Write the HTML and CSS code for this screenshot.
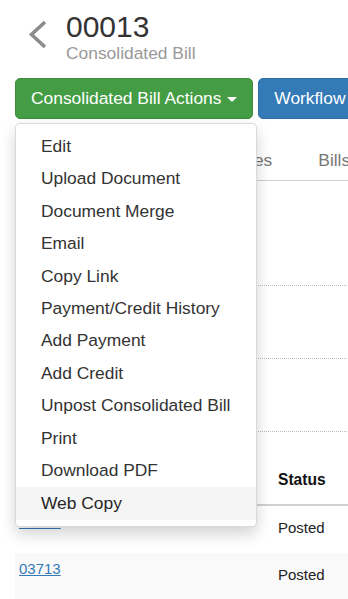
FILE: index.html
```html
<!DOCTYPE html>
<html>
<head>
<meta charset="utf-8">
<link rel="stylesheet" href="styles.css">
</head>
<body>
<div class="page">
  <header class="head">
    <svg class="back" width="20" height="30" viewBox="0 0 20 30"><polyline points="17,2 3.5,14.5 17,27" fill="none" stroke="#8c8c8c" stroke-width="3.6"/></svg>
    <div class="titles">
      <h1 class="num">00013</h1>
      <div class="sub">Consolidated Bill</div>
    </div>
  </header>

  <div class="actions">
    <div class="group">
      <button class="btn btn-green">Consolidated Bill Actions <span class="caret"></span></button>
      <ul class="menu">
        <li class="item">Edit</li>
        <li class="item">Upload Document</li>
        <li class="item">Document Merge</li>
        <li class="item">Email</li>
        <li class="item">Copy Link</li>
        <li class="item">Payment/Credit History</li>
        <li class="item">Add Payment</li>
        <li class="item">Add Credit</li>
        <li class="item">Unpost Consolidated Bill</li>
        <li class="item">Print</li>
        <li class="item">Download PDF</li>
        <li class="item item-hover">Web Copy</li>
      </ul>
    </div>
    <button class="btn btn-blue">Workflow <span class="caret"></span></button>
  </div>

  <ul class="tabs">
    <li class="tab tab-first">Details</li>
    <li class="tab">Fees</li>
    <li class="tab">Notes</li>
    <li class="tab">Bills</li>
  </ul>

  <div class="details">
    <div class="drow drow-first"></div>
    <div class="drow"></div>
    <div class="drow"></div>
  </div>

  <div class="table">
    <div class="trow thead">
      <div class="cell"></div>
      <div class="cell th">Status</div>
    </div>
    <div class="trow">
      <div class="cell cell-link"><a class="link" href="#">03712</a></div>
      <div class="cell cell-text">Posted</div>
    </div>
    <div class="trow trow-striped">
      <div class="cell cell-link"><a class="link" href="#">03713</a></div>
      <div class="cell cell-text">Posted</div>
    </div>
  </div>
</div>
</body>
</html>
```

FILE: styles.css
```css
html, body {
  margin: 0;
  padding: 0;
  overflow: hidden;
  background: #fff;
}
body {
  font-family: "Liberation Sans", Arial, sans-serif;
  color: #333;
  width: 348px;
  height: 599px;
}
.page {
  padding-left: 15px;
  width: 400px;
}
.head {
  display: flex;
  align-items: flex-start;
  padding-top: 11px;
}
.back {
  margin-left: 13px;
  margin-top: 9px;
  flex-shrink: 0;
}
.titles {
  margin-left: 18px;
}
.num {
  margin: 0;
  font-weight: normal;
  font-size: 30px;
  line-height: 32px;
  color: #333;
}
.sub {
  font-size: 17.4px;
  line-height: 20px;
  color: #999;
}
.actions {
  display: flex;
  gap: 5px;
  margin-top: 15px;
  white-space: nowrap;
}
.group {
  position: relative;
  flex-shrink: 0;
}
.btn {
  font-family: "Liberation Sans", Arial, sans-serif;
  font-size: 17.4px;
  line-height: 24.8px;
  padding: 7.1px 15px;
  border: 1px solid transparent;
  border-radius: 5px;
  color: #fff;
  flex-shrink: 0;
  white-space: nowrap;
}
.btn-green {
  background: #449d44;
  border-color: #3d8b3d;
}
.btn-blue {
  background: #337ab7;
  border-color: #2e6da4;
}
.caret {
  display: inline-block;
  width: 0;
  height: 0;
  margin-left: 1px;
  vertical-align: middle;
  border-top: 5px solid #fff;
  border-left: 5px solid transparent;
  border-right: 5px solid transparent;
}
.menu {
  position: absolute;
  top: calc(100% + 4px);
  left: 0;
  z-index: 10;
  margin: 0;
  padding: 6px 0;
  list-style: none;
  width: 242px;
  box-sizing: border-box;
  background: #fff;
  border: 1px solid rgba(0, 0, 0, 0.15);
  border-radius: 5px;
  box-shadow: 0 7px 15px rgba(0, 0, 0, 0.175);
}
.item {
  font-size: 17.4px;
  line-height: 25.1px;
  padding: 3.7px 25px;
  color: #333;
  white-space: nowrap;
}
.item-hover {
  background: #f5f5f5;
  color: #262626;
}
.tabs {
  display: flex;
  margin: 19px 0 0;
  padding: 0;
  list-style: none;
  border-bottom: 1px solid #cfcfcf;
}
.tab {
  font-size: 17.4px;
  line-height: 25px;
  padding: 10px 23px 7px;
  color: #777;
  white-space: nowrap;
}
.tab-first {
  padding-left: 28px;
}
.details {
  width: 332px;
}
.drow {
  height: 72px;
  border-bottom: 1px dotted #bdbdbd;
}
.drow-first {
  height: 104px;
}
.table {
  width: 400px;
}
.trow {
  display: grid;
  grid-template-columns: 259px 1fr;
  height: 47px;
}
.thead {
  height: auto;
  border-bottom: 2px solid #d0d0d0;
}
.cell {
  padding: 0 4px;
  font-size: 15px;
  line-height: 20px;
}
.thead .cell {
  padding-top: 38px;
  padding-bottom: 14px;
}
.th {
  font-weight: bold;
  font-size: 15.6px;
  color: #111;
}
.cell-link {
  padding-top: 6px;
}
.cell-text {
  padding-top: 12px;
  color: #222;
}
.trow-striped {
  background: #f9f9f9;
}
.link {
  color: #337ab7;
  text-decoration: underline;
}
```
